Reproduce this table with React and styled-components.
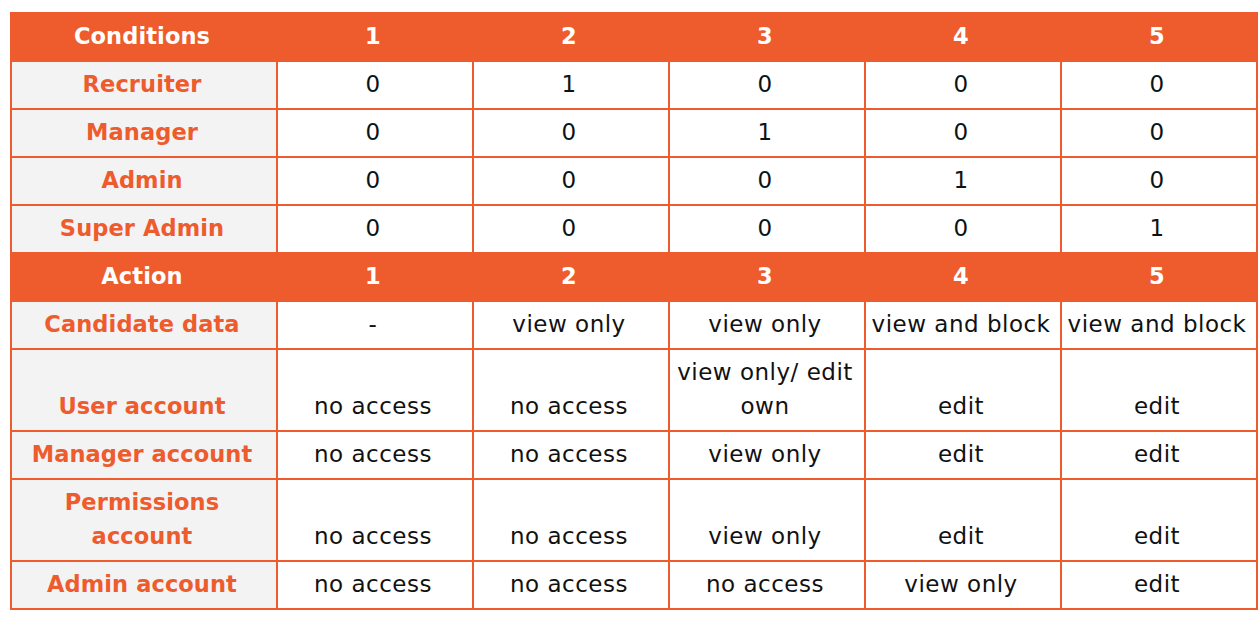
import React from "react";
import styled, { createGlobalStyle } from "styled-components";

const ORANGE = "#EE5B2C";

const Global = createGlobalStyle`
  html, body { margin: 0; padding: 0; background: #ffffff; }
  body { font-family: "DejaVu Sans", "Open Sans", sans-serif; }
`;

const Page = styled.div`
  padding: 12px 0 0 10px;
`;

const Grid = styled.div`
  display: grid;
  grid-template-columns: 264px repeat(5, 194px);
  gap: 2px;
  padding: 2px;
  width: max-content;
  background: ${ORANGE};
`;

const Cell = styled.div`
  display: flex;
  align-items: flex-end;
  justify-content: center;
  text-align: center;
  padding: 5px 5px 7px 1px;
  line-height: 34px;
  min-height: 34px;
  font-size: ${(p) => (p.$head || p.$label ? "22.5px" : "23px")};
  letter-spacing: ${(p) => (p.$head || p.$label ? "0.1px" : "0.5px")};
  background: ${(p) => (p.$head ? ORANGE : p.$label ? "#F3F3F3" : "#FFFFFF")};
  color: ${(p) => (p.$head ? "#FFFFFF" : p.$label ? ORANGE : "#111111")};
  font-weight: ${(p) => (p.$head || p.$label ? 700 : 400)};
`;

const conditions = [
  ["Recruiter", "0", "1", "0", "0", "0"],
  ["Manager", "0", "0", "1", "0", "0"],
  ["Admin", "0", "0", "0", "1", "0"],
  ["Super Admin", "0", "0", "0", "0", "1"],
];

const actions = [
  ["Candidate data", "-", "view only", "view only", "view and block", "view and block"],
  ["User account", "no access", "no access", "view only/ edit own", "edit", "edit"],
  ["Manager account", "no access", "no access", "view only", "edit", "edit"],
  ["Permissions account", "no access", "no access", "view only", "edit", "edit"],
  ["Admin account", "no access", "no access", "no access", "view only", "edit"],
];

function HeadRow({ title }) {
  return (
    <>
      <Cell $head>{title}</Cell>
      {["1", "2", "3", "4", "5"].map((n) => (
        <Cell $head key={n}>{n}</Cell>
      ))}
    </>
  );
}

function BodyRow({ row }) {
  return (
    <>
      <Cell $label>{row[0]}</Cell>
      {row.slice(1).map((v, i) => (
        <Cell key={i}>{v}</Cell>
      ))}
    </>
  );
}

export default function App() {
  return (
    <Page>
      <Global />
      <Grid>
        <HeadRow title="Conditions" />
        {conditions.map((r) => (
          <BodyRow key={r[0]} row={r} />
        ))}
        <HeadRow title="Action" />
        {actions.map((r) => (
          <BodyRow key={r[0]} row={r} />
        ))}
      </Grid>
    </Page>
  );
}
